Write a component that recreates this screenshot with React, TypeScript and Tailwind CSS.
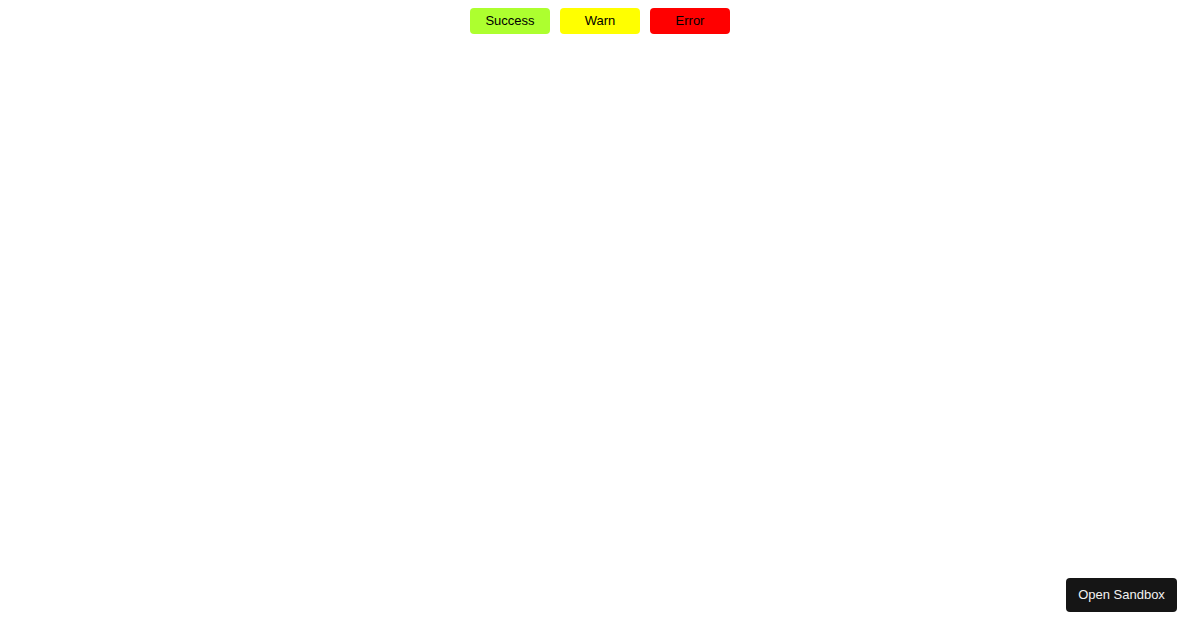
const buttons = [
	{ label: 'Success', className: 'bg-[#adff2f]' },
	{ label: 'Warn', className: 'bg-[#ffff00]' },
	{ label: 'Error', className: 'bg-[#ff0000]' },
]

export default function App() {
	return (
		<div className="relative h-[630px] w-full bg-white font-['Liberation_Sans',Arial,sans-serif]">
			<div className="flex justify-center gap-[10px] pt-2">
				{buttons.map((b) => (
					<button
						key={b.label}
						className={`h-[26px] w-20 rounded-[4px] text-[13px] text-black ${b.className}`}
					>
						{b.label}
					</button>
				))}
			</div>
			<button className="absolute right-[23px] bottom-[18px] h-[34px] w-[111px] rounded-[4px] bg-[#151515] text-[13px] text-[#f2f2f2]">
				Open Sandbox
			</button>
		</div>
	)
}
